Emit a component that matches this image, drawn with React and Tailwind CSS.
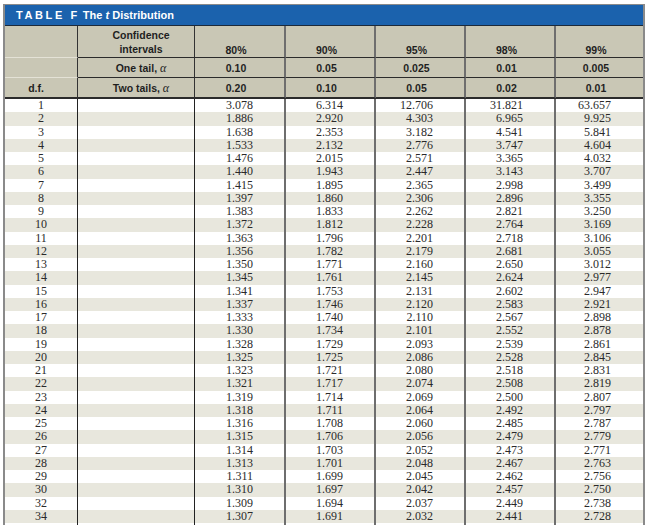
import React from "react";

const rows = [
  ["1", "3.078", "6.314", "12.706", "31.821", "63.657"],
  ["2", "1.886", "2.920", "4.303", "6.965", "9.925"],
  ["3", "1.638", "2.353", "3.182", "4.541", "5.841"],
  ["4", "1.533", "2.132", "2.776", "3.747", "4.604"],
  ["5", "1.476", "2.015", "2.571", "3.365", "4.032"],
  ["6", "1.440", "1.943", "2.447", "3.143", "3.707"],
  ["7", "1.415", "1.895", "2.365", "2.998", "3.499"],
  ["8", "1.397", "1.860", "2.306", "2.896", "3.355"],
  ["9", "1.383", "1.833", "2.262", "2.821", "3.250"],
  ["10", "1.372", "1.812", "2.228", "2.764", "3.169"],
  ["11", "1.363", "1.796", "2.201", "2.718", "3.106"],
  ["12", "1.356", "1.782", "2.179", "2.681", "3.055"],
  ["13", "1.350", "1.771", "2.160", "2.650", "3.012"],
  ["14", "1.345", "1.761", "2.145", "2.624", "2.977"],
  ["15", "1.341", "1.753", "2.131", "2.602", "2.947"],
  ["16", "1.337", "1.746", "2.120", "2.583", "2.921"],
  ["17", "1.333", "1.740", "2.110", "2.567", "2.898"],
  ["18", "1.330", "1.734", "2.101", "2.552", "2.878"],
  ["19", "1.328", "1.729", "2.093", "2.539", "2.861"],
  ["20", "1.325", "1.725", "2.086", "2.528", "2.845"],
  ["21", "1.323", "1.721", "2.080", "2.518", "2.831"],
  ["22", "1.321", "1.717", "2.074", "2.508", "2.819"],
  ["23", "1.319", "1.714", "2.069", "2.500", "2.807"],
  ["24", "1.318", "1.711", "2.064", "2.492", "2.797"],
  ["25", "1.316", "1.708", "2.060", "2.485", "2.787"],
  ["26", "1.315", "1.706", "2.056", "2.479", "2.779"],
  ["27", "1.314", "1.703", "2.052", "2.473", "2.771"],
  ["28", "1.313", "1.701", "2.048", "2.467", "2.763"],
  ["29", "1.311", "1.699", "2.045", "2.462", "2.756"],
  ["30", "1.310", "1.697", "2.042", "2.457", "2.750"],
  ["32", "1.309", "1.694", "2.037", "2.449", "2.738"],
  ["34", "1.307", "1.691", "2.032", "2.441", "2.728"],
];

const sans = { fontFamily: '"Liberation Sans", Arial, sans-serif' };
const serif = { fontFamily: '"Liberation Serif", "Times New Roman", serif' };

function Alpha() {
  return (
    <span className="italic font-normal text-[12px]" style={serif}>
      α
    </span>
  );
}

const widths = ["w-[91px]", "w-[90px]", "w-[90px]", "w-[90px]", "w-[87px]"];

function HeaderRow({ h, df, label, vals, dfBorder, alignEnd }) {
  const al = alignEnd ? "items-end" : "items-center";
  return (
    <div
      className={`flex ${h} text-[10.5px] font-bold text-[#1f1f1f] leading-[14px]`}
      style={sans}
    >
      <div className={`w-[73px] shrink-0 flex ${alignEnd ? "items-end pb-[3px]" : "items-center"} justify-center pr-[10px] border-r border-[#333] border-b ${dfBorder}`}>
        {df}
      </div>
      <div className={`w-[117px] shrink-0 flex ${al} justify-center pl-[10px] border-r border-b border-r-[#333] border-b-[#2b2b2b] text-center`}>
        {label}
      </div>
      {vals.map((v, i) => (
        <div
          key={i}
          className={`${widths[i]} shrink-0 flex ${al} justify-center pr-[7px] border-b border-b-[#2b2b2b] ${i < 4 ? "border-r-2 border-r-[#6e6e6e]" : ""}`}
        >
          {v}
        </div>
      ))}
    </div>
  );
}

export default function App() {
  return (
    <div className="w-[648px] h-[525px] bg-white overflow-hidden">
      <div className="ml-[3px] mt-[4px] w-[642px] border-x-2 border-t border-[#8a8a8a]">
        <div className="h-[21px] bg-[#1b62ad] border-b border-[#1c2a3a] flex items-center pl-[11px] text-white font-bold text-[11px]" style={sans}>
          <span className="tracking-[2.6px]">TABLE F</span>
          <span className="ml-[3px]">
            The <span className="italic">t</span> Distribution
          </span>
        </div>
        <div className="bg-[#c9c7b5]">
          <HeaderRow
            h="h-[32px]"
            df=""
            dfBorder="border-b-[#e4e2d6]"
            label={
              <span className="leading-[14px] pb-[1px]">
                Confidence
                <br />
                intervals
              </span>
            }
            vals={["80%", "90%", "95%", "98%", "99%"]}
            alignEnd
          />
          <HeaderRow
            h="h-[20px]"
            df=""
            dfBorder="border-b-[#e4e2d6]"
            label={
              <span>
                One tail, <Alpha />
              </span>
            }
            vals={["0.10", "0.05", "0.025", "0.01", "0.005"]}
          />
          <div className="border-b border-[#2b2b2b]">
            <HeaderRow
              h="h-[20px]"
              df="d.f."
              dfBorder="border-b-[#2b2b2b]"
              label={
                <span>
                  Two tails, <Alpha />
                </span>
              }
              vals={["0.20", "0.10", "0.05", "0.02", "0.01"]}
            />
          </div>
        </div>
        <div className="text-[12px] text-[#2a2a2a] leading-[13.25px]" style={serif}>
          {rows.concat([["", "", "", "", "", ""]]).map((r, idx) => (
            <div
              key={idx}
              className={`flex h-[13.25px] ${idx % 2 === 1 ? "bg-[#e8e7dd]" : "bg-white"}`}
            >
              <div className="w-[73px] shrink-0 text-center border-r border-[#222]">{r[0]}</div>
              <div className="w-[117px] shrink-0 border-r border-[#222]"></div>
              {r.slice(1).map((v, i) => (
                <div
                  key={i}
                  className={`${widths[i]} shrink-0 text-right ${i === 4 ? "pr-[32px]" : "pr-[31px]"} ${i < 4 ? "border-r-2 border-[#6e6e6e]" : ""}`}
                >
                  {v}
                </div>
              ))}
            </div>
          ))}
        </div>
      </div>
    </div>
  );
}
